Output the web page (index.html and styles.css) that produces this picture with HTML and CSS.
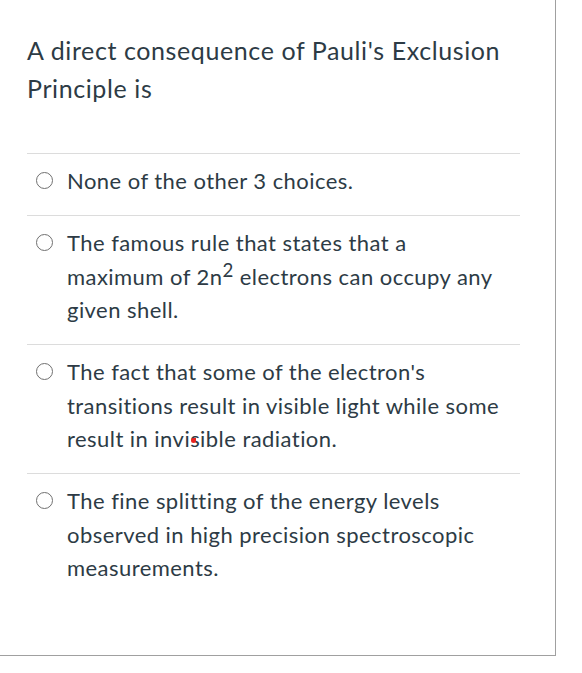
FILE: index.html
```html
<!DOCTYPE html>
<html>
<head>
<meta charset="utf-8">
<link rel="stylesheet" href="styles.css">
</head>
<body>
<div class="panel">
  <div class="question">A direct consequence of Pauli's Exclusion Principle is</div>
  <div class="answers">
    <label class="answer">
      <span class="radio"></span>
      <span class="text">None of the other 3 choices.</span>
    </label>
    <label class="answer">
      <span class="radio"></span>
      <span class="text">The famous rule that states that a maximum of 2n<sup>2</sup> electrons can occupy any given shell.</span>
    </label>
    <label class="answer">
      <span class="radio"></span>
      <span class="text">The fact that some of the electron's transitions result in visible light while some result in invi<span class="cursor-wrap">s<span class="cursor"></span></span>ible radiation.</span>
    </label>
    <label class="answer last">
      <span class="radio"></span>
      <span class="text">The fine splitting of the energy levels observed in high precision spectroscopic measurements.</span>
    </label>
  </div>
</div>
</body>
</html>
```
FILE: styles.css
```css
html, body {
  margin: 0;
  padding: 0;
  background: #ffffff;
}
body {
  font-family: Lato, "Liberation Sans", sans-serif;
  color: #2d3b45;
}
.panel {
  width: 556px;
  height: 656px;
  border-right: 1px solid #a0a0a0;
  border-bottom: 1px solid #a0a0a0;
  padding: 31px 35px 0 27px;
  box-sizing: border-box;
}
.question {
  font-size: 25px;
  letter-spacing: 0.6px;
  line-height: 38px;
  padding-bottom: 46px;
  border-bottom: 1px solid #dcdcdc;
}
.answers {
  display: flex;
  flex-direction: column;
}
.answer {
  display: flex;
  align-items: flex-start;
  padding: 10px 0 17.5px 0;
  border-bottom: 1px solid #dcdcdc;
  font-size: 22px;
  letter-spacing: 0.45px;
  line-height: 33.5px;
}
.answer.last {
  border-bottom: none;
}
.radio {
  flex: none;
  width: 15px;
  height: 15px;
  border: 1.7px solid #707070;
  border-radius: 50%;
  margin: 8px 14px 0 9px;
}
.text {
  flex: 1;
  padding-right: 16px;
}
sup {
  font-size: 0.85em;
  line-height: 0;
  vertical-align: 0.45em;
}
.cursor-wrap {
  position: relative;
}
.cursor {
  position: absolute;
  left: 1px;
  top: 13px;
  width: 5px;
  height: 5px;
  background: #e8221f;
  border-radius: 50% 0 50% 50%;
}
```
